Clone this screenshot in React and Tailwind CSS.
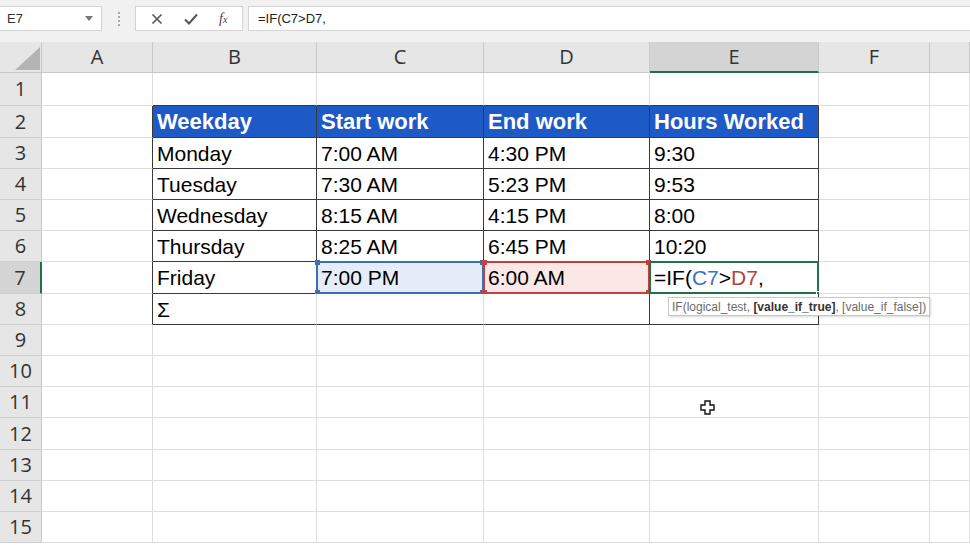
import React from "react";

const COLS = ["A", "B", "C", "D", "E", "F", ""];
const ROW_HEIGHTS = [33, 32, 31, 31, 31, 31, 32, 31, 31, 31, 31, 32, 31, 31, 31];

const DATA = {
    2: ["Weekday", "Start work", "End work", "Hours Worked"],
    3: ["Monday", "7:00 AM", "4:30 PM", "9:30"],
    4: ["Tuesday", "7:30 AM", "5:23 PM", "9:53"],
    5: ["Wednesday", "8:15 AM", "4:15 PM", "8:00"],
    6: ["Thursday", "8:25 AM", "6:45 PM", "10:20"],
    7: ["Friday", "7:00 PM", "6:00 AM", ""],
    8: ["Σ", "", "", ""],
};

function Handle({ className }) {
    return <span className={`absolute w-[5px] h-[5px] ${className}`} />;
}

function Cell({ row, col }) {
    // col index 1..7 (A..G)
    const inTable = row >= 2 && row <= 8 && col >= 2 && col <= 5;
    let border = "border-r border-b border-[#dedede]";
    if (inTable) {
        const rightDark = row !== 8 || col >= 4;
        border = `border-b border-b-[#3a3a3a] border-r ${rightDark ? "border-r-[#3a3a3a]" : "border-r-[#dedede]"}`;
    } else if (col === 1 && row >= 2 && row <= 8) {
        border = "border-b border-b-[#dedede] border-r border-r-[#3a3a3a]";
    } else if (row === 1 && col >= 2 && col <= 5) {
        border = "border-r border-r-[#dedede] border-b border-b-[#3a3a3a]";
    }

    const isHeader = row === 2 && inTable;
    let bg = isHeader ? "bg-[#1e5ac6]" : "bg-white";
    if (row === 7 && col === 3) bg = "bg-[#e6edfa]";
    if (row === 7 && col === 4) bg = "bg-[#fbe8e6]";

    const text = inTable ? DATA[row][col - 2] : "";

    return (
        <div className={`relative flex items-center pl-[4px] ${border} ${bg}`}>
            {isHeader ? (
                <span className="text-[22px] font-bold text-white leading-none">{text}</span>
            ) : (
                <span className="text-[21px] text-black leading-none">{text}</span>
            )}
            {row === 7 && col === 5 && (
                <>
                    <span className="text-[21px] leading-none text-black">
                        =IF(<span className="text-[#3c6fc4]">C7</span>&gt;
                        <span className="text-[#b5403c]">D7</span>,
                    </span>
                    <div className="absolute -left-px -top-px -right-px -bottom-px border-2 border-[#217346]" />
                    <Handle className="-right-[3px] -bottom-[3px] bg-[#217346] border border-white" />
                </>
            )}
            {row === 7 && col === 3 && (
                <>
                    <div className="absolute -left-px -top-px -right-px -bottom-px border-2 border-[#3d6db5]" />
                    <Handle className="-left-[2px] -top-[2px] bg-[#3d6db5]" />
                    <Handle className="-right-[2px] -top-[2px] bg-[#3d6db5]" />
                    <Handle className="-left-[2px] -bottom-[2px] bg-[#3d6db5]" />
                    <Handle className="-right-[2px] -bottom-[2px] bg-[#3d6db5]" />
                </>
            )}
            {row === 7 && col === 4 && (
                <>
                    <div className="absolute -left-px -top-px -right-px -bottom-px border-2 border-[#c0433f]" />
                    <Handle className="-left-[2px] -top-[2px] bg-[#c0433f]" />
                    <Handle className="-right-[2px] -top-[2px] bg-[#c0433f]" />
                    <Handle className="-left-[2px] -bottom-[2px] bg-[#c0433f]" />
                    <Handle className="-right-[2px] -bottom-[2px] bg-[#c0433f]" />
                </>
            )}
        </div>
    );
}

function Toolbar() {
    return (
        <div className="h-[42px] bg-[#f1f1f1] flex items-start pt-[6px] font-['Liberation_Sans',sans-serif]">
            <div className="w-[102px] h-[25px] bg-white border border-[#d4d4d4] border-l-0 flex items-center justify-between pl-[7px] pr-[8px]">
                <span className="text-[13px] text-[#333]">E7</span>
                <svg width="8" height="5" viewBox="0 0 8 5"><path d="M0 0h8L4 5z" fill="#777" /></svg>
            </div>
            <div className="w-[33px] h-[25px] flex flex-col items-center justify-center gap-[2px]">
                <span className="w-[2px] h-[2px] bg-[#aaa]" />
                <span className="w-[2px] h-[2px] bg-[#aaa]" />
                <span className="w-[2px] h-[2px] bg-[#aaa]" />
                <span className="w-[2px] h-[2px] bg-[#aaa]" />
            </div>
            <div className="w-[108px] h-[25px] bg-white border border-[#d4d4d4] flex items-center justify-around px-[4px]">
                <svg width="12" height="12" viewBox="0 0 12 12"><path d="M1.5 1.5l9 9M10.5 1.5l-9 9" stroke="#555" strokeWidth="1.6" /></svg>
                <svg width="14" height="12" viewBox="0 0 14 12"><path d="M1 6.5l4 4L13 1.5" stroke="#555" strokeWidth="2" fill="none" /></svg>
                <span className="font-['Liberation_Serif',serif] italic text-[14px] text-[#444]">f<span className="text-[10px]">x</span></span>
            </div>
            <div className="flex-1 ml-[5px] h-[25px] bg-white border border-[#d4d4d4] border-r-0 flex items-center pl-[9px]">
                <span className="text-[13px] text-[#222]">=IF(C7&gt;D7,</span>
            </div>
        </div>
    );
}

export default function App() {
    const gridCols = "grid-cols-[42px_111px_164px_167px_166px_169px_111px_40px]";
    return (
        <div className="w-[970px] h-[546px] overflow-hidden bg-white relative">
            <Toolbar />
            <div className={`grid ${gridCols} font-['Liberation_Sans',sans-serif]`}>
                {/* column headers */}
                <div className="h-[31px] bg-[#e6e6e6] border-r border-b border-[#c8c8c8] relative">
                    <svg className="absolute left-[15px] top-[5px]" width="25" height="23" viewBox="0 0 25 23">
                        <path d="M25 0v23H0z" fill="#b4b4b4" />
                    </svg>
                </div>
                {COLS.map((c, i) => (
                    <div
                        key={i}
                        className={`h-[31px] flex items-center justify-center text-[20px] text-[#333] font-['Open_Sans',sans-serif] border-r border-[#c8c8c8] ${
                            c === "E" ? "bg-[#d4d4d4] border-b-2 border-b-[#217346]" : "bg-[#e6e6e6] border-b border-b-[#c8c8c8]"
                        }`}
                    >
                        {c}
                    </div>
                ))}
                {ROW_HEIGHTS.map((h, ri) => {
                    const row = ri + 1;
                    return (
                        <React.Fragment key={row}>
                            <div
                                style={{ height: h }}
                                className={`flex items-center justify-center text-[20px] text-[#333] font-['Open_Sans',sans-serif] border-b border-[#cfcfcf] ${
                                    row === 7 ? "bg-[#d4d4d4] border-r-2 border-r-[#217346]" : "bg-[#e6e6e6] border-r border-r-[#c8c8c8]"
                                }`}
                            >
                                {row}
                            </div>
                            {[1, 2, 3, 4, 5, 6, 7].map((col) => (
                                <Cell key={col} row={row} col={col} />
                            ))}
                        </React.Fragment>
                    );
                })}
            </div>

            {/* function argument tooltip */}
            <div className="absolute left-[668px] top-[297px] h-[19px] px-[3px] flex items-center bg-white border border-[#c6c6c6] shadow-[1px_1px_2px_rgba(0,0,0,0.15)] font-['Liberation_Sans',sans-serif] text-[12px] text-[#6b6b6b] whitespace-nowrap">
                IF(logical_test,&nbsp;<b className="text-[#333]">[value_if_true]</b>, [value_if_false])
            </div>

            {/* mouse cursor */}
            <svg className="absolute left-[700px] top-[400px]" width="15" height="15" viewBox="0 0 15 15">
                <path d="M5 1h5v4h4v5h-4v4H5v-4H1V5h4z" fill="white" stroke="#111" strokeWidth="1.4" />
            </svg>
        </div>
    );
}
